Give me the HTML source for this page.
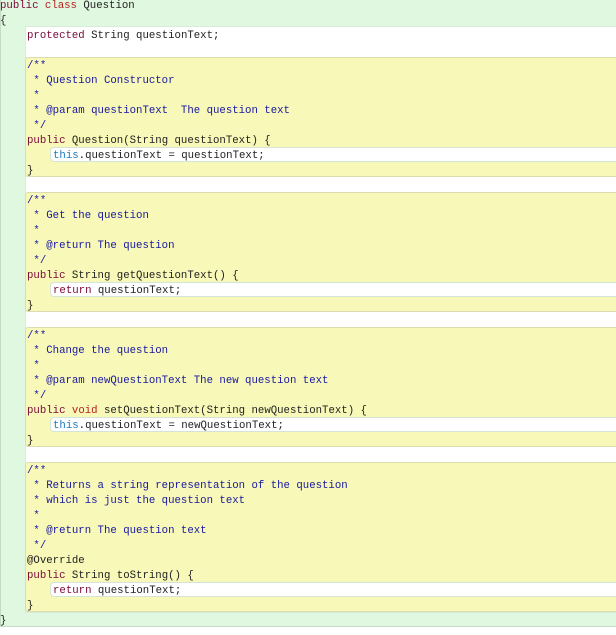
<!DOCTYPE html>
<html><head><style>
html,body{margin:0;padding:0;background:#fff;width:616px;height:635px;overflow:hidden;position:relative;
font-family:"Liberation Mono",monospace;font-size:10.7px;}
.b{position:absolute;box-sizing:border-box;}
.cls{left:0;top:-2px;width:640px;height:629px;background:#e0f8e0;border:1px solid #c4dcc4;}
.in{left:25px;top:26px;width:620px;height:587px;background:#fff;border:1px solid #d8ecd8;border-right:0;}
.m{left:25px;width:620px;background:#f8f8b8;border:1px solid #dcdcb0;border-right:0;border-radius:3px 0 0 3px;}
.bd{left:50px;width:600px;height:15px;background:#fff;border:1px solid #d4e4d8;border-right:0;border-radius:4px 0 0 4px;}
#code{position:absolute;left:0;top:2px;width:616px;height:635px;}
.l{position:absolute;height:15px;line-height:15px;white-space:pre;color:#222;}
.k{color:#7a0838}.r{color:#b82020}.c{color:#1818a0}.t{color:#1a7cc0}
</style></head><body>
<div class="b cls"></div>
<div class="b in"></div>
<div class="b m" style="top:57px;height:120px"></div>
<div class="b m" style="top:192px;height:120px"></div>
<div class="b m" style="top:327px;height:120px"></div>
<div class="b m" style="top:462px;height:150px"></div>
<div class="b bd" style="top:147px"></div>
<div class="b bd" style="top:282px"></div>
<div class="b bd" style="top:417px"></div>
<div class="b bd" style="top:582px"></div>
<div id="code">
<div class="l" style="left:0;top:-3px"><span class="k">public</span> <span class="r">class</span> Question</div>
<div class="l" style="left:0;top:12px">{</div>
<div class="l" style="left:27px;top:27px"><span class="k">protected</span> String questionText;</div>
<div class="l c" style="left:27px;top:57px">/**</div>
<div class="l c" style="left:27px;top:72px"> * Question Constructor</div>
<div class="l c" style="left:27px;top:87px"> *</div>
<div class="l c" style="left:27px;top:102px"> * @param questionText  The question text</div>
<div class="l c" style="left:27px;top:117px"> */</div>
<div class="l" style="left:27px;top:132px"><span class="k">public</span> Question(String questionText) {</div>
<div class="l" style="left:53px;top:147px"><span class="t">this</span>.questionText = questionText;</div>
<div class="l" style="left:27px;top:162px">}</div>
<div class="l c" style="left:27px;top:192px">/**</div>
<div class="l c" style="left:27px;top:207px"> * Get the question</div>
<div class="l c" style="left:27px;top:222px"> *</div>
<div class="l c" style="left:27px;top:237px"> * @return The question</div>
<div class="l c" style="left:27px;top:252px"> */</div>
<div class="l" style="left:27px;top:267px"><span class="k">public</span> String getQuestionText() {</div>
<div class="l" style="left:53px;top:282px"><span class="k">return</span> questionText;</div>
<div class="l" style="left:27px;top:297px">}</div>
<div class="l c" style="left:27px;top:327px">/**</div>
<div class="l c" style="left:27px;top:342px"> * Change the question</div>
<div class="l c" style="left:27px;top:357px"> *</div>
<div class="l c" style="left:27px;top:372px"> * @param newQuestionText The new question text</div>
<div class="l c" style="left:27px;top:387px"> */</div>
<div class="l" style="left:27px;top:402px"><span class="k">public</span> <span class="r">void</span> setQuestionText(String newQuestionText) {</div>
<div class="l" style="left:53px;top:417px"><span class="t">this</span>.questionText = newQuestionText;</div>
<div class="l" style="left:27px;top:432px">}</div>
<div class="l c" style="left:27px;top:462px">/**</div>
<div class="l c" style="left:27px;top:477px"> * Returns a string representation of the question</div>
<div class="l c" style="left:27px;top:492px"> * which is just the question text</div>
<div class="l c" style="left:27px;top:507px"> *</div>
<div class="l c" style="left:27px;top:522px"> * @return The question text</div>
<div class="l c" style="left:27px;top:537px"> */</div>
<div class="l" style="left:27px;top:552px">@Override</div>
<div class="l" style="left:27px;top:567px"><span class="k">public</span> String toString() {</div>
<div class="l" style="left:53px;top:582px"><span class="k">return</span> questionText;</div>
<div class="l" style="left:27px;top:597px">}</div>
<div class="l" style="left:0;top:612px">}</div>
</div>
</body></html>
